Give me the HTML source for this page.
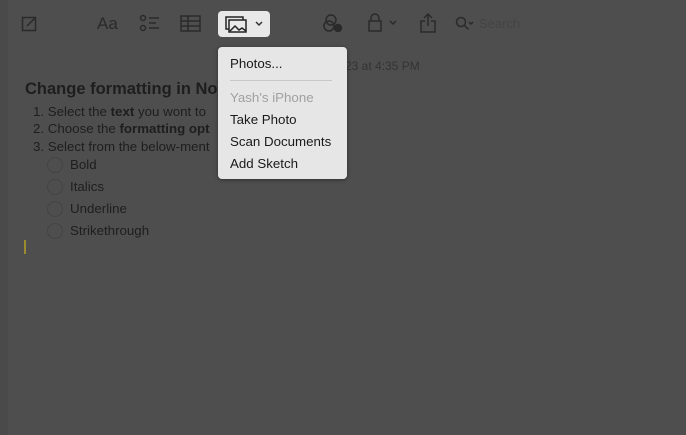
<!DOCTYPE html>
<html><head><style>
body{margin:0;width:686px;height:435px;background:#4e4e4e;font-family:"Liberation Sans",sans-serif;overflow:hidden;position:relative;color:#1e1e1e}
.a{position:absolute}
.ic{position:absolute;stroke:#2a2a2a;fill:none;stroke-width:1.5}
.t{font-size:13.3px;position:absolute;white-space:nowrap}
.c{position:absolute;width:14px;height:14px;border-radius:50%;border:1px solid #444;left:47px}
.menu{position:absolute;left:218px;top:47px;width:129px;height:132px;background:#e6e6e6;border-radius:4px;box-shadow:0 1px 4px rgba(0,0,0,.4)}
.menu div{position:absolute;left:12px;font-size:13.3px;color:#1a1a1a}
</style></head><body>
<div class="a" style="left:0;top:0;width:8px;height:435px;background:#4a4a4a"></div>
<svg class="ic" style="left:21px;top:15px" width="18" height="18"><rect x="1.5" y="2.5" width="13" height="13"/><path d="M6 11l8-8"/></svg>
<div class="a" style="left:97px;top:14px;font-size:17px;color:#2a2a2a">Aa</div>
<svg class="ic" style="left:139px;top:14px" width="22" height="20"><circle cx="4" cy="4" r="2.5"/><circle cx="4" cy="14" r="2.5"/><path d="M10 4h10M10 14h10M10 9h7"/></svg>
<svg class="ic" style="left:180px;top:15px" width="22" height="18"><rect x="1" y="1" width="19" height="15"/><path d="M1 6h19M1 11h19M8 1v15"/></svg>
<div class="a" style="left:218px;top:11px;width:52px;height:26px;background:#e8e8e8;border-radius:4px"></div>
<svg class="ic" style="left:225px;top:16px;stroke:#222" width="24" height="18"><rect x="1" y="1" width="17" height="12"/><rect x="4" y="4" width="17" height="12" fill="#e8e8e8"/><path d="M5 15l5-5 4 4 3-2 4 3" /></svg>
<svg class="ic" style="left:254px;top:20px;stroke:#333" width="10" height="8"><path d="M2 2l3 3 3-3"/></svg>
<svg class="ic" style="left:323px;top:13px" width="22" height="20"><circle cx="8" cy="7" r="5"/><circle cx="6" cy="13" r="5"/><circle cx="15" cy="15" r="3.5" fill="#2a2a2a"/></svg>
<svg class="ic" style="left:368px;top:13px" width="14" height="20"><path d="M3 8V5a4 4 0 0 1 8 0v3"/><rect x="1" y="8" width="12" height="10"/></svg>
<svg class="ic" style="left:388px;top:19px" width="10" height="8"><path d="M2 2l3 3 3-3"/></svg>
<svg class="ic" style="left:419px;top:12px" width="18" height="22"><path d="M9 2v12M5 6l4-4 4 4M6 9H2v11h14V9h-4"/></svg>
<svg class="ic" style="left:455px;top:16px" width="20" height="16"><circle cx="6" cy="6" r="4.5"/><path d="M9.5 9.5l4 4M14 6l2 2 2-2"/></svg>
<div class="a" style="left:479px;top:16px;font-size:13px;color:#444">Search</div>
<div class="t" style="left:345px;top:59px;font-size:12px;color:#333">23 at 4:35 PM</div>
<div class="t" style="left:25px;top:80px;font-size:16.5px;font-weight:bold">Change formatting in No</div>
<div class="t" style="left:33px;top:104px">1. Select the <b>text</b> you wont to</div>
<div class="t" style="left:33px;top:121px">2. Choose the <b>formatting opt</b></div>
<div class="t" style="left:33px;top:139px">3. Select from the below-ment</div>
<div class="c" style="top:157px"></div><div class="t" style="left:70px;top:157px">Bold</div>
<div class="c" style="top:179px"></div><div class="t" style="left:70px;top:179px">Italics</div>
<div class="c" style="top:201px"></div><div class="t" style="left:70px;top:201px">Underline</div>
<div class="c" style="top:223px"></div><div class="t" style="left:70px;top:223px">Strikethrough</div>
<div class="a" style="left:24px;top:240px;width:2px;height:14px;background:#9a8a30"></div>
<div class="menu">
<div style="top:9px">Photos...</div>
<div style="top:33px;left:12px;width:102px;height:1px;background:#c8c8c8"></div>
<div style="top:43px;color:#a0a0a0">Yash's iPhone</div>
<div style="top:65px">Take Photo</div>
<div style="top:87px">Scan Documents</div>
<div style="top:109px">Add Sketch</div>
</div>
</body></html>
